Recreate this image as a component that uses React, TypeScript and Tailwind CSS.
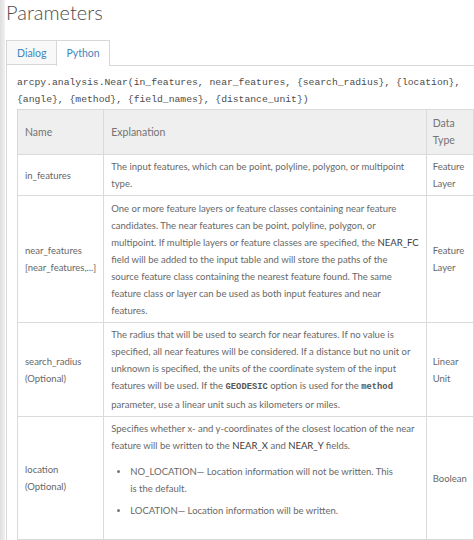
import * as React from "react";

const sans = "font-['Lato','Open_Sans',sans-serif]";
const mono = "font-['Liberation_Mono','DejaVu_Sans_Mono',monospace]";

interface Row {
  name: React.ReactNode;
  type: React.ReactNode;
  body: React.ReactNode;
  h: string;
}

function Code({ children }: { children: React.ReactNode }) {
  return <span className={`${mono} text-[8.8px] font-bold text-[#555]`}>{children}</span>;
}

function Strong({ children }: { children: React.ReactNode }) {
  return <span className="text-[#3a3a3a]">{children}</span>;
}

// lines are broken where the reference breaks them
function Lines({ lines }: { lines: React.ReactNode[] }) {
  return (
    <p>
      {lines.map((l, i) => (
        <React.Fragment key={i}>
          {i > 0 && <br />}
          {l}
        </React.Fragment>
      ))}
    </p>
  );
}

const rows: Row[] = [
  {
    name: "in_features",
    type: (
      <>
        Feature
        <br />
        Layer
      </>
    ),
    h: "h-[41px]",
    body: (
      <Lines
        lines={["The input features, which can be point, polyline, polygon, or multipoint", "type."]}
      />
    ),
  },
  {
    name: (
      <>
        near_features
        <br />
        [near_features,...]
      </>
    ),
    type: (
      <>
        Feature
        <br />
        Layer
      </>
    ),
    h: "h-[127px]",
    body: (
      <Lines
        lines={[
          "One or more feature layers or feature classes containing near feature",
          "candidates. The near features can be point, polyline, polygon, or",
          <>
            multipoint. If multiple layers or feature classes are specified, the{" "}
            <Strong>NEAR_FC</Strong>
          </>,
          "field will be added to the input table and will store the paths of the",
          "source feature class containing the nearest feature found. The same",
          "feature class or layer can be used as both input features and near",
          "features.",
        ]}
      />
    ),
  },
  {
    name: (
      <>
        search_radius
        <br />
        (Optional)
      </>
    ),
    type: (
      <>
        Linear
        <br />
        Unit
      </>
    ),
    h: "h-[89px]",
    body: (
      <Lines
        lines={[
          "The radius that will be used to search for near features. If no value is",
          "specified, all near features will be considered. If a distance but no unit or",
          "unknown is specified, the units of the coordinate system of the input",
          <>
            features will be used. If the <Code>GEODESIC</Code> option is used for the{" "}
            <Code>method</Code>
          </>,
          "parameter, use a linear unit such as kilometers or miles.",
        ]}
      />
    ),
  },
  {
    name: (
      <>
        location
        <br />
        (Optional)
      </>
    ),
    type: "Boolean",
    h: "h-[123px]",
    body: (
      <>
        <Lines
          lines={[
            "Specifies whether x- and y-coordinates of the closest location of the near",
            <>
              feature will be written to the <Strong>NEAR_X</Strong> and <Strong>NEAR_Y</Strong>{" "}
              fields.
            </>,
          ]}
        />
        <ul className="mt-[9px] mb-[17px] list-disc pl-[19px] marker:text-[#777]">
          <li className="mb-[5px]">
            NO_LOCATION— Location information will not be written. This
            <br />
            is the default.
          </li>
          <li>LOCATION— Location information will be written.</li>
        </ul>
      </>
    ),
  },
  {
    name: "",
    type: "",
    h: "h-[30px]",
    body: null,
  },
];

export default function App() {
  return (
    <div className={`flex min-h-[540px] w-[474px] overflow-hidden bg-white ${sans}`}>
      <div className="w-[5px] shrink-0 bg-gradient-to-r from-[#dedede] to-[#f1f1f1]" />
      <div className="flex-1 pl-[1px]">
        <h2 className="h-[40px] text-[20px] leading-[24px] font-light text-[#4c4c4c]">
          Parameters
        </h2>

        <div className="flex text-[10.5px] text-[#3f86bd]">
          <div className="h-[25px] border border-[#d8d8d8] bg-[#f8f8f8] px-[10px] leading-[24px]">
            Dialog
          </div>
          <div className="relative -ml-px h-[26px] border border-b-0 border-[#d8d8d8] bg-white px-[9px] leading-[24px]">
            Python
          </div>
          <div className="flex-1 border-b border-[#d8d8d8]" />
        </div>

        <div className="-mt-px border-l border-[#d8d8d8] pt-[9px] pl-[10px]">
          <pre className={`${mono} text-[9.72px] leading-[17px] text-[#4c4c4c]`}>
            {"arcpy.analysis.Near(in_features, near_features, {search_radius}, {location},\n{angle}, {method}, {field_names}, {distance_unit})"}
          </pre>

          <table className="mt-[1px] w-[448px] border-collapse text-[9.5px] leading-[17px] text-[#686868]">
            <thead>
              <tr className="h-[45px] bg-[#efefef] text-[10.5px] text-[#747474]">
                <th className="w-[87px] border border-[#dadada] px-[7px] text-left font-normal">Name</th>
                <th className="border border-[#dadada] px-[7px] text-left font-normal">Explanation</th>
                <th className="w-[44px] border border-[#dadada] px-[6px] text-left font-normal">
                  Data
                  <br />
                  Type
                </th>
              </tr>
            </thead>
            <tbody>
              {rows.map((r, i) => (
                <tr key={i} className={r.h}>
                  <td className="border border-[#dadada] px-[7px] align-middle">{r.name}</td>
                  <td className="border border-[#dadada] px-[7px] py-[3px] align-middle whitespace-nowrap">
                    {r.body}
                  </td>
                  <td className="border border-[#dadada] px-[6px] align-middle">{r.type}</td>
                </tr>
              ))}
            </tbody>
          </table>
        </div>
      </div>
    </div>
  );
}
